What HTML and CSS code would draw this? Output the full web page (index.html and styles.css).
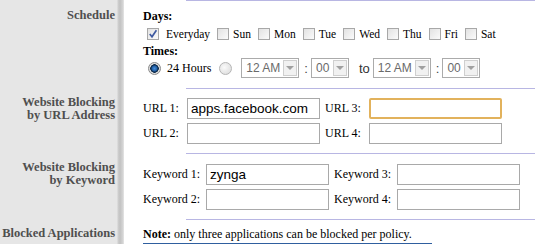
FILE: index.html
```html
<!DOCTYPE html>
<html lang="en">
<head>
    <meta charset="UTF-8">
    <title>Access Policy</title>
    <link rel="stylesheet" href="styles.css">
</head>
<body>
    <div class="form">

        <!-- Schedule -->
        <div class="row">
            <div class="label first">Schedule</div>
            <div class="field sched">
                <div class="head">Days:</div>
                <div class="days">
                    <span class="day"><span class="box on"><svg viewBox="0 0 12 12" width="12" height="12"><path d="M2.8 6 L5 8.8 L9.4 2.2" fill="none" stroke="#3f5aa0" stroke-width="1.7"/></svg></span><span class="everyday">Everyday</span></span>
                    <span class="day"><span class="box"></span>Sun</span>
                    <span class="day"><span class="box"></span>Mon</span>
                    <span class="day"><span class="box"></span>Tue</span>
                    <span class="day"><span class="box"></span>Wed</span>
                    <span class="day"><span class="box"></span>Thu</span>
                    <span class="day"><span class="box"></span>Fri</span>
                    <span class="day"><span class="box"></span>Sat</span>
                </div>
                <div class="head times">Times:</div>
                <div class="timeline">
                    <span class="radio on"></span>
                    <span class="hours">24 Hours</span>
                    <span class="radio"></span>
                    <span class="select wide"><span class="val">12 AM</span><span class="arrow"></span></span>
                    <span class="sep">:</span>
                    <span class="select"><span class="val">00</span><span class="arrow"></span></span>
                    <span class="to">to</span>
                    <span class="select wide"><span class="val">12 AM</span><span class="arrow"></span></span>
                    <span class="sep">:</span>
                    <span class="select"><span class="val">00</span><span class="arrow"></span></span>
                </div>
            </div>
        </div>

        <!-- URL blocking -->
        <div class="row">
            <div class="label">Website Blocking<br>by URL Address</div>
            <div class="field pairs url">
                <span>URL 1:</span><input type="text" value="apps.facebook.com">
                <span>URL 3:</span><input type="text" class="focus">
                <span>URL 2:</span><input type="text">
                <span>URL 4:</span><input type="text">
            </div>
        </div>

        <!-- Keyword blocking -->
        <div class="row">
            <div class="label">Website Blocking<br>by Keyword</div>
            <div class="field pairs keyword">
                <span>Keyword 1:</span><input type="text" value="zynga">
                <span>Keyword 3:</span><input type="text">
                <span>Keyword 2:</span><input type="text">
                <span>Keyword 4:</span><input type="text">
            </div>
        </div>

        <!-- Applications -->
        <div class="row">
            <div class="label last">Blocked Applications</div>
            <div class="field apps">
                <p class="note"><b>Note:</b> only three applications can be blocked per policy.</p>
                <div class="app-table"></div>
            </div>
        </div>

    </div>
</body>
</html>
```

FILE: styles.css
```css
body {
    margin: 0;
    background-color: #fff;
    font-family: "Liberation Serif", "Times New Roman", serif;
    font-size: 12px;
    color: #000;
    overflow: hidden;
}

.row {
    display: grid;
    grid-template-columns: 124px 1fr;
}

/* left grey column with the shadow strip */
.label {
    background: linear-gradient(to right, #e6e6e6 0, #e6e6e6 117px, #cfcfcf 118px, #c2c2c2 120px, #d6d6d6 123px, #e9e9e9 124px);
    text-align: right;
    padding: 8px 9px 0 0;
    font-size: 12.5px;
    line-height: 13px;
    font-weight: bold;
    color: #4f4f4f;
}

.label.first {
    padding-top: 9px;
}

.label.last {
    padding-top: 8px;
}

/* lavender rule only under the fields, starts a bit in */
.field {
    background: linear-gradient(#b8b6e3, #b8b6e3) no-repeat 62px 0 / 100% 1px;
    padding: 9px 0 9px 19px;
}

.head {
    font-weight: bold;
    line-height: 14px;
}

.sched {
    padding-bottom: 10px;
}

.days {
    display: flex;
    align-items: center;
    height: 16px;
    margin-top: 3px;
    padding-left: 4px;
    gap: 7px;
    font-size: 11.5px;
}

.day {
    display: flex;
    align-items: center;
}

.box {
    width: 10px;
    height: 10px;
    margin-right: 4px;
    border: 1px solid #a8a8a8;
    background: linear-gradient(135deg, #e2e2e2, #fbfbfb);
    display: flex;
}

.box svg {
    margin: -1px;
}

.everyday {
    margin-left: 3px;
}

.times {
    margin-top: 2px;
}

.timeline {
    display: flex;
    align-items: center;
    height: 20px;
    padding-left: 5px;
}

.radio {
    width: 11px;
    height: 11px;
    border-radius: 50%;
    border: 1px solid #b5b5b5;
    background: radial-gradient(circle at 40% 40%, #fafafa, #d8d8d8);
}

.radio.on {
    border-color: #8a8a8a;
    background: radial-gradient(circle, #4a8fd8 0, #1f5fa8 2.5px, #0d2a4a 3.5px, #0d2a4a 4px, #dcdcdc 4.5px);
}

.hours {
    margin: 0 8px 0 6px;
}

.select {
    display: flex;
    align-items: center;
    justify-content: space-between;
    box-sizing: border-box;
    width: 38px;
    height: 20px;
    border: 1px solid #ababab;
    padding: 0 1px 0 4px;
    font-family: "Liberation Sans", Arial, sans-serif;
    font-size: 12px;
    color: #6a6a6a;
    white-space: nowrap;
    margin-left: 9px;
}

.select.wide {
    width: 58px;
}

.arrow {
    flex-shrink: 0;
    box-sizing: border-box;
    width: 14px;
    height: 16px;
    border: 1px solid #cfcfcf;
    background: #f1f1f1;
    display: flex;
    align-items: center;
    justify-content: center;
}

.arrow::after {
    content: "";
    border-left: 4px solid transparent;
    border-right: 4px solid transparent;
    border-top: 4px solid #a0a0a0;
}

.sep {
    margin-left: 5px;
    font-family: "Liberation Sans", Arial, sans-serif;
    font-size: 13px;
    color: #444;
}

.sep + .select {
    margin-left: 3px;
}

.to {
    margin-left: 10px;
    font-family: "Liberation Sans", Arial, sans-serif;
    font-size: 13px;
    color: #333;
}

.to + .select {
    margin-left: 3px;
}

/* label / input grid */
.pairs {
    display: grid;
    row-gap: 4px;
    align-items: center;
}

.url {
    grid-template-columns: 44px 133px 49px 133px;
    padding-top: 10px;
}

.keyword {
    grid-template-columns: 63px 123px 68px 123px;
    padding-top: 11px;
}

.pairs span {
    padding-left: 5px;
}

.pairs span:first-child,
.pairs span:nth-child(5) {
    padding-left: 0;
}

.pairs input {
    box-sizing: border-box;
    height: 21px;
    margin: 0;
    border: 1px solid #a9a9a9;
    padding: 0 3px;
    font-family: "Liberation Sans", Arial, sans-serif;
    font-size: 13.5px;
    color: #000;
    outline: none;
}

.pairs input.focus {
    border: 2px solid #e2b25c;
    border-radius: 2px;
}

.apps {
    padding-top: 8px;
}

.note {
    margin: 0;
    line-height: 14px;
}

.app-table {
    width: 289px;
    height: 20px;
    margin-top: 2px;
    border-top: 1px solid #2f5f9f;
}
```
